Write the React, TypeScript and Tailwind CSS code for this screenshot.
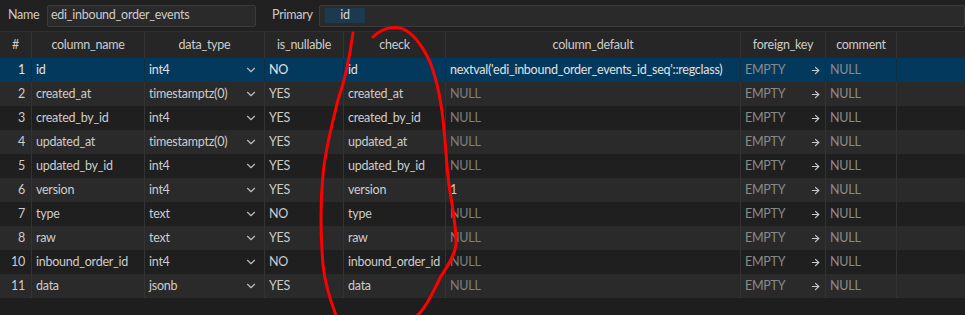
import { ArrowRight, ChevronDown } from 'lucide-react';

interface Row {
  n: number;
  name: string;
  type: string;
  nullable: string;
  def: string | null;
}

const rows: Row[] = [
  { n: 1, name: 'id', type: 'int4', nullable: 'NO', def: "nextval('edi_inbound_order_events_id_seq'::regclass)" },
  { n: 2, name: 'created_at', type: 'timestamptz(0)', nullable: 'YES', def: null },
  { n: 3, name: 'created_by_id', type: 'int4', nullable: 'YES', def: null },
  { n: 4, name: 'updated_at', type: 'timestamptz(0)', nullable: 'YES', def: null },
  { n: 5, name: 'updated_by_id', type: 'int4', nullable: 'YES', def: null },
  { n: 6, name: 'version', type: 'int4', nullable: 'YES', def: '1' },
  { n: 7, name: 'type', type: 'text', nullable: 'NO', def: null },
  { n: 8, name: 'raw', type: 'text', nullable: 'YES', def: null },
  { n: 10, name: 'inbound_order_id', type: 'int4', nullable: 'NO', def: null },
  { n: 11, name: 'data', type: 'jsonb', nullable: 'YES', def: null },
];

const cols = 'grid grid-cols-[32px_113px_120px_79px_102px_295px_85px_71px_1fr]';
const headers = ['#', 'column_name', 'data_type', 'is_nullable', 'check', 'column_default', 'foreign_key', 'comment', ''];

export default function App() {
  return (
    <div className="relative h-[315px] w-[965px] overflow-hidden bg-[#1e1e1e] font-['Lato',sans-serif] text-[12.5px] tracking-[-0.25px] text-[#cccccc]">
      {/* top bar */}
      <div className="flex h-[32px] items-center border-b border-[#2f2f2f] bg-[#212121] pl-[8px]">
        <span className="w-[39px]">Name</span>
        <div className="flex h-[22px] w-[209px] items-center rounded-[2px] border border-[#3a3a3a] bg-[#2a2a2a] px-[3px]">
          edi_inbound_order_events
        </div>
        <span className="ml-[16px] w-[47px]">Primary</span>
        <div className="flex h-[22px] flex-1 items-center rounded-[2px] border border-[#3a3a3a] bg-[#2a2a2a] pl-[5px]">
          <span className="flex h-[15px] w-[40px] items-center justify-center bg-[#1c3a4e] text-[#d4d4d4]">id</span>
        </div>
      </div>

      {/* header */}
      <div className={`${cols} h-[26px] bg-[#262626]`}>
        {headers.map((h, i) => (
          <div key={i} className="flex items-center justify-center border-r border-[#333333] last:border-r-0">
            {h}
          </div>
        ))}
      </div>

      {rows.map((r, i) => {
        const selected = i === 0;
        const bg = selected ? 'bg-[#04395e] text-[#e0e0e0]' : i % 2 === 1 ? 'bg-[#2a2a2a]' : 'bg-[#1f1f1f]';
        const cell = `flex items-center border-r ${selected ? 'border-[#0f2f45]' : 'border-[#333333]'} px-[4px] overflow-hidden whitespace-nowrap`;
        return (
          <div key={r.n} className={`${cols} h-[24px] ${bg}`}>
            <div className={`${cell} justify-end pr-[6px]`}>{r.n}</div>
            <div className={cell}>{r.name}</div>
            <div className={`${cell} justify-between pr-[6px]`}>
              <span>{r.type}</span>
              <ChevronDown size={14} strokeWidth={2} className="text-[#bbbbbb]" />
            </div>
            <div className={cell}>{r.nullable}</div>
            <div className={cell}>{r.name}</div>
            <div className={cell}>
              {r.def ? <span>{r.def}</span> : <span className="text-[#7f7f7f]">NULL</span>}
            </div>
            <div className={`${cell} justify-between pr-[4px] text-[#8a8a8a]`}>
              <span>EMPTY</span>
              <ArrowRight size={11} strokeWidth={2.5} className="text-[#c8c8c8]" />
            </div>
            <div className={`${cell} text-[#8a8a8a]`}>NULL</div>
            <div className="" />
          </div>
        );
      })}

      {/* red pen annotation */}
      <svg className="pointer-events-none absolute inset-0" width="965" height="315" viewBox="0 0 965 315" fill="none">
        <path
          d="M353 33 C350 55 345 80 338 100 C332 125 325 150 323 175 C320 205 321 240 323 265 C325 285 330 300 337 318"
          stroke="#ff0000"
          strokeWidth="3"
          strokeLinecap="round"
        />
        <path
          d="M373 37 C380 30 390 26 400 28 C412 31 422 45 430 62 C437 80 442 105 444 130 C446 150 447 170 449 185 C452 205 457 230 456 245 C454 258 446 268 440 278 C434 290 428 305 418 315 C414 318 410 320 405 322"
          stroke="#ff0000"
          strokeWidth="3"
          strokeLinecap="round"
        />
      </svg>
    </div>
  );
}
